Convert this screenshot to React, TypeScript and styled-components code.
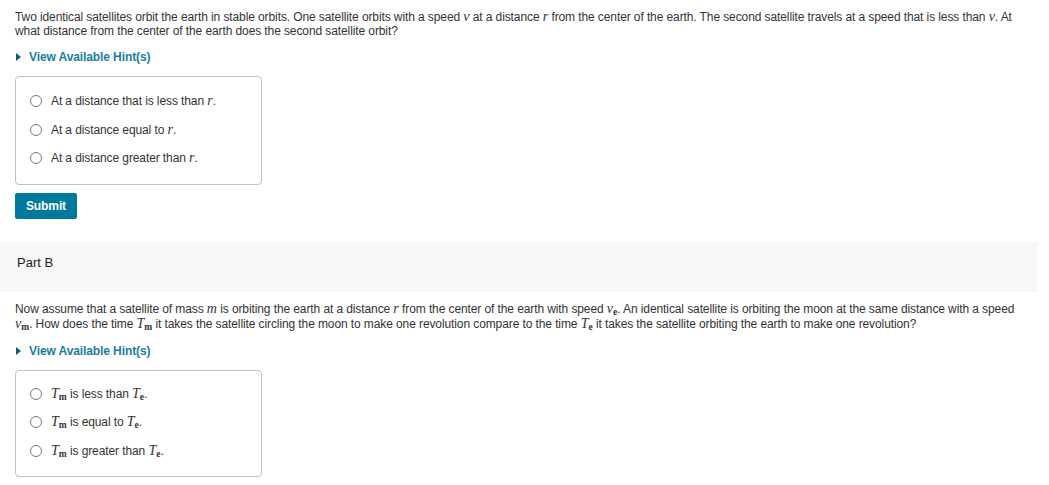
import React from "react";
import styled, { createGlobalStyle } from "styled-components";

const GlobalStyle = createGlobalStyle`
  html, body { margin: 0; padding: 0; background: #ffffff; }
  body {
    font-family: "Liberation Sans", Arial, sans-serif;
    font-size: 12px;
    letter-spacing: -0.1px;
    color: #333333;
  }
`;

const Page = styled.div`
  width: 1038px;
`;

const Section = styled.section<{ $top: number }>`
  padding: ${(p) => p.$top}px 12px 0 15px;
`;

const Question = styled.p<{ $lh: number }>`
  margin: 0;
  line-height: ${(p) => p.$lh}px;
`;

const MathVar = styled.span`
  font-family: "Liberation Serif", "Times New Roman", serif;
  font-style: italic;
  font-size: 14px;
  letter-spacing: 0;
  line-height: 0;
`;

const Sub = styled.sub`
  font-family: "Liberation Serif", "Times New Roman", serif;
  font-style: normal;
  font-weight: bold;
  font-size: 9.5px;
  line-height: 0;
  vertical-align: -2px;
`;

const HintToggle = styled.div<{ $mt: number }>`
  margin-top: ${(p) => p.$mt}px;
  display: flex;
  align-items: center;
  gap: 8px;
  height: 14px;
  font-weight: bold;
  color: #1b7ca1;
  cursor: pointer;
`;

const Caret = styled.span`
  width: 0;
  height: 0;
  border-top: 4.5px solid transparent;
  border-bottom: 4.5px solid transparent;
  border-left: 5px solid #135a76;
  margin-left: 1px;
`;

const OptionsBox = styled.div<{ $mt: number; $pt: number }>`
  margin-top: ${(p) => p.$mt}px;
  width: 247px;
  box-sizing: border-box;
  border: 1px solid #c2c2c2;
  border-radius: 4px;
  padding: ${(p) => p.$pt}px 0 11px 0;
`;

const Option = styled.label`
  display: flex;
  align-items: center;
  height: 28.5px;
  padding-left: 14px;
  gap: 9px;
  color: #333333;
`;

const Radio = styled.span`
  width: 12px;
  height: 12px;
  box-sizing: border-box;
  border: 1px solid #7a7a7a;
  border-radius: 50%;
  background: #ffffff;
  flex: none;
`;

const SubmitButton = styled.button`
  margin-top: 8px;
  width: 62px;
  height: 26px;
  border: none;
  border-radius: 2px;
  background: #007a9c;
  color: #ffffff;
  font-family: "Liberation Sans", Arial, sans-serif;
  font-size: 12px;
  font-weight: bold;
  letter-spacing: -0.1px;
  padding: 0;
`;

const PartHeader = styled.div`
  margin-top: 23px;
  height: 50px;
  box-sizing: border-box;
  background: #f7f7f7;
  padding: 13px 0 0 17px;
  font-size: 13px;
  line-height: 15px;
  letter-spacing: 0;
  color: #222222;
`;

const V = ({ children }: { children: React.ReactNode }) => <MathVar>{children}</MathVar>;

const App: React.FC = () => {
  const optionsA = [
    "At a distance that is less than ",
    "At a distance equal to ",
    "At a distance greater than ",
  ];
  const optionsB = ["is less than ", "is equal to ", "is greater than "];

  return (
    <Page>
      <GlobalStyle />
      <Section $top={10}>
        <Question $lh={14}>
          Two identical satellites orbit the earth in stable orbits. One satellite orbits with a speed <V>v</V> at a
          distance <V>r</V> from the center of the earth. The second satellite travels at a speed that is less than{" "}
          <V>v</V>. At what distance from the center of the earth does the second satellite orbit?
        </Question>
        <HintToggle $mt={12}>
          <Caret />
          View Available Hint(s)
        </HintToggle>
        <OptionsBox $mt={12} $pt={10}>
          {optionsA.map((t) => (
            <Option key={t}>
              <Radio />
              <span>
                {t}
                <V>r</V>.
              </span>
            </Option>
          ))}
        </OptionsBox>
        <SubmitButton>Submit</SubmitButton>
      </Section>
      <PartHeader>Part B</PartHeader>
      <Section $top={10}>
        <Question $lh={15}>
          Now assume that a satellite of mass <V>m</V> is orbiting the earth at a distance <V>r</V> from the center of
          the earth with speed{" "}
          <V>
            v<Sub>e</Sub>
          </V>
          . An identical satellite is orbiting the moon at the same distance with a speed{" "}
          <V>
            v<Sub>m</Sub>
          </V>
          . How does the time{" "}
          <V>
            T<Sub>m</Sub>
          </V>{" "}
          it takes the satellite circling the moon to make one revolution compare to the time{" "}
          <V>
            T<Sub>e</Sub>
          </V>{" "}
          it takes the satellite orbiting the earth to make one revolution?
        </Question>
        <HintToggle $mt={12}>
          <Caret />
          View Available Hint(s)
        </HintToggle>
        <OptionsBox $mt={12} $pt={9}>
          {optionsB.map((t) => (
            <Option key={t}>
              <Radio />
              <span>
                <V>
                  T<Sub>m</Sub>
                </V>{" "}
                {t}
                <V>
                  T<Sub>e</Sub>
                </V>
                .
              </span>
            </Option>
          ))}
        </OptionsBox>
      </Section>
    </Page>
  );
};

export default App;
